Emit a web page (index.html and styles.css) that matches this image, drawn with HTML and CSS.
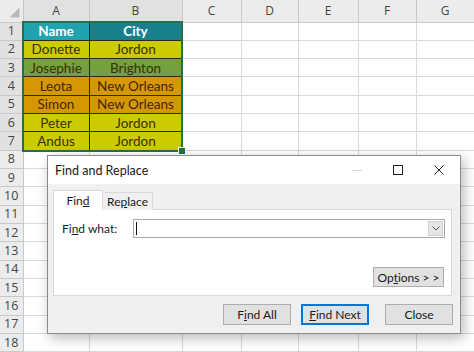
FILE: index.html
```html
<!DOCTYPE html>
<html>
<head>
    <title>Find and Replace</title>
    <link rel="stylesheet" href="styles.css">
</head>
<body>
    <!-- the worksheet -->
    <table class="sheet">
        <colgroup>
            <col class="c-rh"><col class="c-a"><col class="c-b"><col class="c-c">
            <col class="c-d"><col class="c-e"><col class="c-f"><col class="c-g">
        </colgroup>
        <tr class="colhead">
            <th class="corner"><span class="tri"></span></th>
            <th class="sel">A</th><th class="sel">B</th><th>C</th><th>D</th><th>E</th><th>F</th><th>G</th>
        </tr>
        <tr><th class="sel">1</th><td class="t hd1">Name</td><td class="t hd2">City</td><td></td><td></td><td></td><td></td><td></td></tr>
        <tr><th class="sel">2</th><td class="t yl">Donette</td><td class="t yl">Jordon</td><td></td><td></td><td></td><td></td><td></td></tr>
        <tr><th class="sel">3</th><td class="t gr">Josephie</td><td class="t gr">Brighton</td><td></td><td></td><td></td><td></td><td></td></tr>
        <tr><th class="sel">4</th><td class="t or">Leota</td><td class="t or">New Orleans</td><td></td><td></td><td></td><td></td><td></td></tr>
        <tr><th class="sel">5</th><td class="t or">Simon</td><td class="t or">New Orleans</td><td></td><td></td><td></td><td></td><td></td></tr>
        <tr><th class="sel">6</th><td class="t yl">Peter</td><td class="t yl">Jordon</td><td></td><td></td><td></td><td></td><td></td></tr>
        <tr><th class="sel">7</th><td class="t yl">Andus</td><td class="t yl">Jordon</td><td></td><td></td><td></td><td></td><td></td></tr>
        <tr><th>8</th><td></td><td></td><td></td><td></td><td></td><td></td><td></td></tr>
        <tr><th>9</th><td></td><td></td><td></td><td></td><td></td><td></td><td></td></tr>
        <tr><th>10</th><td></td><td></td><td></td><td></td><td></td><td></td><td></td></tr>
        <tr><th>11</th><td></td><td></td><td></td><td></td><td></td><td></td><td></td></tr>
        <tr><th>12</th><td></td><td></td><td></td><td></td><td></td><td></td><td></td></tr>
        <tr><th>13</th><td></td><td></td><td></td><td></td><td></td><td></td><td></td></tr>
        <tr><th>14</th><td></td><td></td><td></td><td></td><td></td><td></td><td></td></tr>
        <tr><th>15</th><td></td><td></td><td></td><td></td><td></td><td></td><td></td></tr>
        <tr><th>16</th><td></td><td></td><td></td><td></td><td></td><td></td><td></td></tr>
        <tr><th>17</th><td></td><td></td><td></td><td></td><td></td><td></td><td></td></tr>
        <tr><th>18</th><td></td><td></td><td></td><td></td><td></td><td></td><td></td></tr>
    </table>

    <!-- the selection outline over A1:B7 -->
    <div class="selection"><span class="handle"></span></div>

    <!-- the Find and Replace dialog -->
    <div class="dialog">
        <div class="titlebar">
            <span class="title">Find and Replace</span>
            <div class="winbtns">
                <span class="wb min"></span>
                <svg class="wb" width="10" height="10" viewBox="0 0 10 10"><rect x="0.5" y="0.5" width="9" height="9" fill="none" stroke="#222" stroke-width="1"/></svg>
                <svg class="wb" width="10" height="10" viewBox="0 0 10 10"><path d="M0.5 0.5 L9.5 9.5 M9.5 0.5 L0.5 9.5" stroke="#222" stroke-width="1"/></svg>
            </div>
        </div>
        <div class="dlg-body">
            <div class="tabs">
                <span class="tab active">Fin<u>d</u></span>
                <span class="tab">Re<u>p</u>lace</span>
            </div>
            <div class="panel">
                <div class="field-row">
                    <span class="label">Fi<u>n</u>d what:</span>
                    <div class="combo">
                        <span class="caret"></span>
                        <span class="drop">
                            <svg width="8" height="5" viewBox="0 0 8 5"><path d="M0.5 0.5 L4 4 L7.5 0.5" fill="none" stroke="#555" stroke-width="1"/></svg>
                        </span>
                    </div>
                </div>
                <div class="opt-row">
                    <span class="btn">Op<u>t</u>ions &gt; &gt;</span>
                </div>
            </div>
            <div class="btn-row">
                <span class="btn">F<u>i</u>nd All</span>
                <span class="btn default"><u>F</u>ind Next</span>
                <span class="btn close">Close</span>
            </div>
        </div>
    </div>
</body>
</html>
```

FILE: styles.css
```css
/* Page */
body {
    margin: 0;
    padding: 0;
    overflow: hidden;
    background: #fff;
    width: 474px;
    height: 352px;
    position: relative;
}

/* The worksheet grid */
.sheet {
    border-collapse: collapse;
    table-layout: fixed;
    width: 474px;
    font-family: Lato, "Liberation Sans", sans-serif;
}

.c-rh { width: 23px; }
.c-a { width: 66px; }
.c-b { width: 93px; }
.c-c { width: 59px; }
.c-d { width: 57px; }
.c-e { width: 60px; }
.c-f { width: 58px; }
.c-g { width: 58px; }

.sheet tr {
    height: 18.33px;
}

.sheet td {
    border-right: 1px solid #d9d9d9;
    border-bottom: 1px solid #d9d9d9;
    padding: 0;
}

.sheet th {
    background: #ececec;
    color: #444;
    font-family: "Open Sans", "Noto Sans", sans-serif;
    font-weight: normal;
    font-size: 12.5px;
    border-right: 1px solid #c8c8c8;
    border-bottom: 1px solid #c8c8c8;
    padding: 0;
    text-align: center;
    line-height: 16px;
}

.sheet th.sel {
    background: #e1e1e1;
}

.sheet .colhead {
    height: 22px;
}

.sheet .colhead th {
    font-size: 12px;
}

.corner {
    position: relative;
}

.tri {
    position: absolute;
    right: 3px;
    bottom: 4px;
    width: 10px;
    height: 10px;
    background: #b9b9b9;
    clip-path: polygon(100% 0, 100% 100%, 0 100%);
}

/* Coloured table cells */
.sheet td.t {
    border: 1px solid #2e2a10;
    text-align: center;
    font-size: 13.5px;
    color: #3a3000;
    line-height: 16px;
    white-space: nowrap;
}

.hd1 { background: #21a3ad; color: #fff !important; font-weight: bold; }
.hd2 { background: #17828d; color: #fff !important; font-weight: bold; }
.yl { background: #cbcb02; }
.gr { background: #74a13d; }
.or { background: #d69705; color: #452600 !important; }

/* Selection outline */
.selection {
    position: absolute;
    left: 22px;
    top: 21px;
    width: 157px;
    height: 127px;
    border: 2px solid #217346;
    pointer-events: none;
}

.handle {
    position: absolute;
    right: -5px;
    bottom: -5px;
    width: 6px;
    height: 6px;
    background: #217346;
    border: 1px solid #fff;
}

/* The dialog window */
.dialog {
    position: absolute;
    left: 47px;
    top: 155px;
    width: 414px;
    height: 179px;
    box-sizing: border-box;
    border: 1px solid #8c8c8c;
    background: #f0f0f0;
    box-shadow: 3px 4px 12px rgba(0, 0, 0, 0.28);
    font-family: Lato, "Noto Sans", sans-serif;
    font-size: 12px;
    color: #1a1a1a;
    display: flex;
    flex-direction: column;
}

.titlebar {
    height: 28px;
    background: #fff;
    display: flex;
    align-items: center;
    justify-content: space-between;
    padding-left: 7px;
    flex-shrink: 0;
}

.title {
    font-size: 12.5px;
}

.winbtns {
    display: flex;
    align-items: center;
    gap: 31px;
    padding-right: 16px;
}

.wb.min {
    width: 10px;
    height: 1px;
    background: #d6d6d6;
}

.dlg-body {
    flex: 1;
    padding: 6px 7px 0 5px;
    display: flex;
    flex-direction: column;
}

/* Tabs */
.tabs {
    display: flex;
    align-items: flex-end;
    height: 20px;
    margin-bottom: -1px;
    position: relative;
    z-index: 1;
}

.tab {
    width: 50px;
    height: 18px;
    box-sizing: border-box;
    border: 1px solid #d9d9d9;
    border-bottom: none;
    background: #f0f0f0;
    text-align: center;
    line-height: 17px;
}

.tab.active {
    height: 20px;
    background: #fff;
    line-height: 19px;
}

.tab + .tab {
    border-left: none;
}

.panel {
    height: 87px;
    box-sizing: border-box;
    border: 1px solid #d9d9d9;
    background: #fff;
    margin-right: 1px;
    padding: 9px 6px 0 8px;
}

.field-row {
    display: flex;
    align-items: center;
}

.label {
    width: 71px;
}

.combo {
    flex: 1;
    height: 19px;
    box-sizing: border-box;
    border: 1px solid #a9a9a9;
    display: flex;
    align-items: center;
    justify-content: space-between;
}

.caret {
    width: 1px;
    height: 13px;
    background: #111;
    margin-left: 2px;
}

.drop {
    width: 15px;
    height: 15px;
    margin-right: 1px;
    background: #e5e5e5;
    border: 1px solid #cfcfcf;
    box-sizing: border-box;
    display: flex;
    align-items: center;
    justify-content: center;
}

.opt-row {
    display: flex;
    justify-content: flex-end;
    margin-top: 29px;
    padding-right: 1px;
}

/* Buttons */
.btn {
    display: inline-flex;
    align-items: center;
    justify-content: center;
    width: 68px;
    height: 21px;
    box-sizing: border-box;
    border: 1px solid #adadad;
    background: #e1e1e1;
    white-space: nowrap;
}

.opt-row .btn {
    width: 71px;
    height: 20px;
}

.btn-row {
    display: flex;
    justify-content: flex-end;
    margin-top: 8px;
    gap: 10px;
}

.btn.default {
    border: 1px solid #0078d7;
    box-shadow: inset 0 0 0 1px #0078d7;
}

.btn.close {
    margin-left: 6px;
}
```
